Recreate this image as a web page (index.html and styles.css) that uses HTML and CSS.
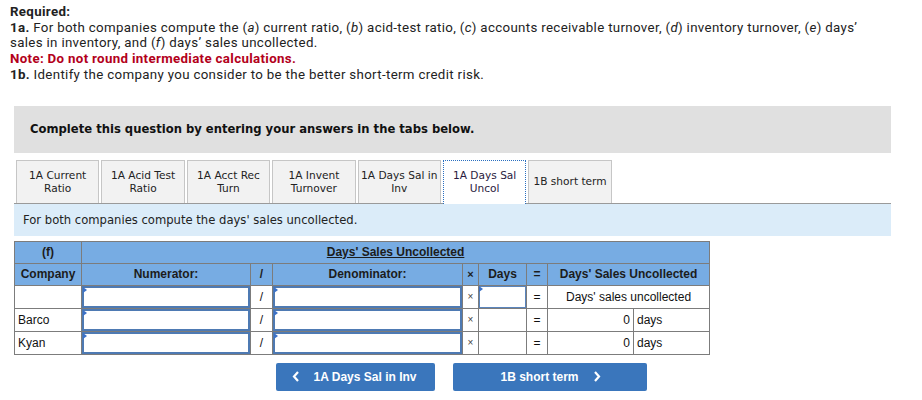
FILE: index.html
```html
<!DOCTYPE html>
<html>
<head>
<meta charset="utf-8">
<link rel="stylesheet" href="styles.css">
</head>
<body>
<div class="req">
  <div class="line"><b>Required:</b></div>
  <div class="line"><b>1a.</b> For both companies compute the (<i>a</i>) current ratio, (<i>b</i>) acid-test ratio, (<i>c</i>) accounts receivable turnover, (<i>d</i>) inventory turnover, (<i>e</i>) days’</div>
  <div class="line">sales in inventory, and (<i>f</i>) days’ sales uncollected.</div>
  <div class="line note">Note: Do not round intermediate calculations.</div>
  <div class="line"><b>1b.</b> Identify the company you consider to be the better short-term credit risk.</div>
</div>

<div class="qbox">Complete this question by entering your answers in the tabs below.</div>

<div class="tabs">
  <div class="tab">1A Current<br>Ratio</div>
  <div class="tab">1A Acid Test<br>Ratio</div>
  <div class="tab">1A Acct Rec<br>Turn</div>
  <div class="tab">1A Invent<br>Turnover</div>
  <div class="tab">1A Days Sal in<br>Inv</div>
  <div class="tab active">1A Days Sal<br>Uncol</div>
  <div class="tab">1B short term</div>
</div>
<div class="instr">For both companies compute the days' sales uncollected.</div>

<table class="grid">
  <colgroup>
    <col class="c-co"><col class="c-num"><col class="c-div"><col class="c-den"><col class="c-x"><col class="c-days"><col class="c-eq"><col class="c-res"><col class="c-unit">
  </colgroup>
  <tr class="h1">
    <th>(f)</th>
    <th colspan="8"><span class="title">Days' Sales Uncollected</span></th>
  </tr>
  <tr class="h2">
    <th>Company</th>
    <th>Numerator:</th>
    <th class="sym">/</th>
    <th>Denominator:</th>
    <th class="sym xs">×</th>
    <th>Days</th>
    <th class="sym">=</th>
    <th colspan="2">Days' Sales Uncollected</th>
  </tr>
  <tr class="r r1">
    <td></td>
    <td class="in"><div class="field"></div></td>
    <td class="sym">/</td>
    <td class="in"><div class="field"></div></td>
    <td class="sym x">×</td>
    <td class="in"><div class="field thin"></div></td>
    <td class="sym">=</td>
    <td colspan="2" class="center">Days' sales uncollected</td>
  </tr>
  <tr class="r">
    <td>Barco</td>
    <td class="in"><div class="field"></div></td>
    <td class="sym">/</td>
    <td class="in"><div class="field"></div></td>
    <td class="sym x">×</td>
    <td></td>
    <td class="sym">=</td>
    <td class="num">0</td>
    <td class="unit">days</td>
  </tr>
  <tr class="r">
    <td>Kyan</td>
    <td class="in"><div class="field"></div></td>
    <td class="sym">/</td>
    <td class="in"><div class="field"></div></td>
    <td class="sym x">×</td>
    <td></td>
    <td class="sym">=</td>
    <td class="num">0</td>
    <td class="unit">days</td>
  </tr>
</table>

<div class="nav">
  <div class="btn prev">
    <svg width="8" height="11" viewBox="0 0 8 11"><path d="M6 1 L2 5.5 L6 10" fill="none" stroke="#fff" stroke-width="2.2"/></svg>
    <span>1A Days Sal in Inv</span>
  </div>
  <div class="btn next">
    <span>1B short term</span>
    <svg width="8" height="11" viewBox="0 0 8 11"><path d="M2 1 L6 5.5 L2 10" fill="none" stroke="#fff" stroke-width="2.2"/></svg>
  </div>
</div>
</body>
</html>
```

FILE: styles.css
```css
html, body {
  margin: 0;
  padding: 0;
  background: #fff;
}
body {
  padding: 4px 10px 0 10px;
  width: 902px;
  font-family: Roboto, "Open Sans", sans-serif;
  color: #222;
}
.req {
  font-size: 13.3px;
  line-height: 15.7px;
  letter-spacing: 0.33px;
}
.req b { font-weight: 700; }
.req .note { color: #b3001b; font-weight: 700; }

.qbox {
  margin: 23px 0 0 4px;
  width: 877px;
  height: 47px;
  box-sizing: border-box;
  background: #e0e0e0;
  padding-left: 16px;
  display: flex;
  align-items: center;
  font-family: Verdana, "DejaVu Sans", sans-serif;
  font-weight: bold;
  font-size: 11.6px;
  color: #111;
}

.tabs {
  margin: 7px 0 0 4px;
  width: 877px;
  display: flex;
  gap: 2px;
  padding-left: 2px;
  box-sizing: border-box;
  border-bottom: 1px solid #9a9a9a;
  height: 44px;
}
.tab {
  width: 83.4px;
  height: 43px;
  box-sizing: border-box;
  background: #f2f2f2;
  border: 1px solid #c6c6c6;
  border-bottom: none;
  display: flex;
  align-items: center;
  justify-content: center;
  text-align: center;
  font-family: Verdana, "DejaVu Sans", sans-serif;
  font-size: 10.6px;
  line-height: 13px;
  color: #222;
}
.tab.active {
  background: #fff;
  border: 1px dotted #2a6fc0;
  border-bottom: none;
  height: 44px;
  color: #2a1a40;
}
.instr {
  margin-left: 4px;
  width: 877px;
  height: 32px;
  background: #dbecf9;
  display: flex;
  align-items: center;
  padding-left: 9px;
  box-sizing: border-box;
  font-family: Verdana, "DejaVu Sans", sans-serif;
  font-size: 11.6px;
  color: #222;
}

.grid {
  margin: 5px 0 0 4px;
  border-collapse: collapse;
  table-layout: fixed;
  width: 695px;
  font-family: "Liberation Sans", Arial, sans-serif;
  font-size: 12px;
  color: #111;
}
.c-co { width: 67px; }
.c-num { width: 169px; }
.c-div { width: 22px; }
.c-den { width: 190px; }
.c-x { width: 16px; }
.c-days { width: 48px; }
.c-eq { width: 21px; }
.c-res { width: 86px; }
.c-unit { width: 76px; }
.grid th, .grid td {
  border: 1px solid #7c7c7c;
  padding: 0;
}
.grid th {
  background: #77ace3;
  font-weight: bold;
  color: #1c1c1c;
  text-align: center;
}
.h1 { height: 22px; }
.h2 { height: 22px; }
.r { height: 22px; }
.title { text-decoration: underline; }
.grid td { padding: 0 3px; }
.grid td.in { padding: 0; position: relative; }
.grid td.sym, .grid th.sym { text-align: center; padding: 0; }
.grid td.x { font-size: 10px; color: #444; }
.grid th.xs { font-size: 11px; }
.grid td.center { text-align: center; }
.grid td.num { text-align: right; padding-right: 3px; }
.grid td.unit { text-align: left; padding-left: 3px; }
.field {
  height: 22px;
  box-sizing: border-box;
  border: 2px solid #4e7ab3;
  background: #fff;
  position: relative;
}
.field.thin { border-width: 1.5px; border-color: #5a85bd; }
.field::before {
  content: "";
  position: absolute;
  left: -1px;
  top: -1px;
  border-top: 3px solid transparent;
  border-bottom: 3px solid transparent;
  border-left: 4px solid #3c71c7;
}

.nav {
  margin-top: 8px;
  margin-left: -10px;
  width: 922px;
  display: flex;
  justify-content: center;
  gap: 18px;
}
.btn {
  height: 28px;
  background: #3a76bc;
  border-radius: 2px;
  color: #fff;
  font-family: "Liberation Sans", Arial, sans-serif;
  font-weight: bold;
  font-size: 12px;
  display: flex;
  align-items: center;
  justify-content: center;
  gap: 14px;
  box-sizing: border-box;
}
.btn.prev { width: 159px; padding-right: 2px; }
.btn.next { width: 194px; padding-left: 2px; }
```
